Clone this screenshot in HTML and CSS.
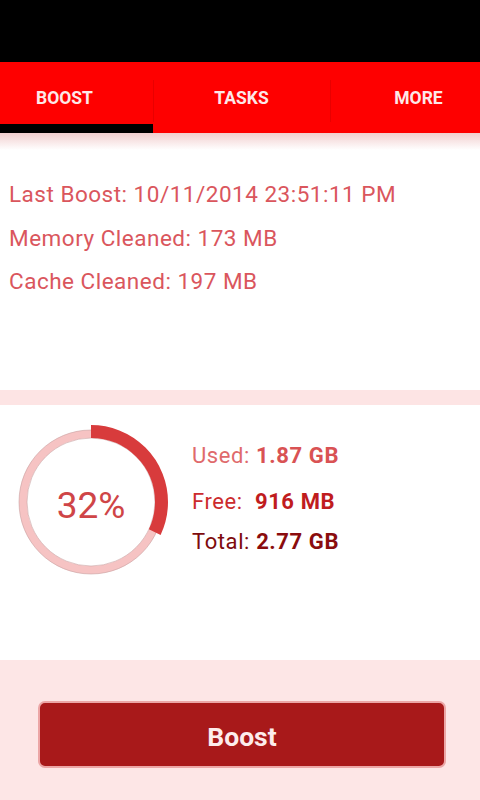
FILE: index.html
```html
<!DOCTYPE html>
<html>
<head>
<meta charset="utf-8">
<link rel="stylesheet" href="styles.css">
</head>
<body>
<div class="status"></div>
<div class="tabbar">
  <div class="tabs">
    <div class="tab active"><span>BOOST</span></div>
    <div class="tab"><span>TASKS</span></div>
    <div class="tab"><span>MORE</span></div>
  </div>
</div>
<div class="shadow"></div>
<div class="info">
  <p class="line">Last Boost: 10/11/2014 23:51:11 PM</p>
  <p class="line">Memory Cleaned: 173 MB</p>
  <p class="line">Cache Cleaned: 197 MB</p>
</div>
<div class="band"></div>
<div class="memory">
  <div class="gauge">
    <svg width="160" height="160" viewBox="0 0 160 160">
      <circle cx="80" cy="80" r="68" fill="none" stroke="#f6c3c3" stroke-width="8"/>
      <circle cx="80" cy="80" r="72" fill="none" stroke="#c9a5a5" stroke-width="0.6"/>
      <circle cx="80" cy="80" r="64" fill="none" stroke="#c9a5a5" stroke-width="0.6"/>
      <circle cx="80" cy="80" r="70.5" fill="none" stroke="#d83b3c" stroke-width="13" stroke-dasharray="141.7 400" transform="rotate(-90 80 80)"/>
    </svg>
    <div class="pct">32%</div>
  </div>
  <div class="stats">
    <div class="row used"><span class="lbl">Used:</span> <b>1.87 GB</b></div>
    <div class="row free"><span class="lbl">Free:</span>&nbsp; <b>916 MB</b></div>
    <div class="row total"><span class="lbl">Total:</span> <b>2.77 GB</b></div>
  </div>
</div>
<div class="footer">
  <button class="boost">Boost</button>
</div>
</body>
</html>
```

FILE: styles.css
```css
* { box-sizing: border-box; }
html, body { margin: 0; padding: 0; }
body {
  width: 480px;
  height: 800px;
  overflow: hidden;
  font-family: Roboto, "Liberation Sans", sans-serif;
  background: #fff;
}
.status { height: 62px; background: #000; }
.tabbar {
  height: 71px;
  background: #fe0000;
  overflow: hidden;
}
.tabs {
  display: flex;
  margin-left: -24px;
  height: 100%;
}
.tab {
  position: relative;
  flex: 0 0 177px;
  display: flex;
  align-items: center;
  justify-content: center;
  color: #fde8e8;
  font-weight: 700;
  font-size: 17.5px;
  padding-top: 1px;
}
.tab + .tab::before {
  content: "";
  position: absolute;
  left: 0;
  top: 18px;
  height: 42px;
  width: 1px;
  background: #e80000;
}
.tab.active::after {
  content: "";
  position: absolute;
  left: 0;
  right: 0;
  bottom: 0;
  height: 9px;
  background: #000;
}
.shadow {
  height: 17px;
  background: linear-gradient(to bottom, #f2cfcf, #ffffff);
}
.info {
  height: 240px;
  padding: 23px 0 0 9px;
}
.line {
  margin: 0;
  font-size: 22.5px;
  letter-spacing: 0.5px;
  line-height: 43.5px;
  color: #da565d;
  white-space: nowrap;
}
.band { height: 15px; background: #fde4e4; }
.memory {
  height: 255px;
  display: flex;
  align-items: flex-start;
  padding: 17px 0 0 11px;
}
.gauge {
  position: relative;
  width: 160px;
  height: 160px;
  flex: 0 0 160px;
}
.gauge svg { display: block; }
.pct {
  position: absolute;
  inset: 0;
  display: flex;
  align-items: center;
  justify-content: center;
  font-size: 37px;
  color: #cf4547;
  padding-top: 7px;
}
.stats {
  margin-left: 21px;
  padding-top: 20px;
  font-size: 22px;
  letter-spacing: 0.6px;
}
.row { white-space: nowrap; line-height: 28px; }
.row b { font-weight: 700; }
.used { color: #df6a6c; }
.used b { color: #d95254; }
.free { color: #cc2b2d; margin-top: 18px; }
.free b { color: #c01c1e; }
.total { color: #7e0b0d; margin-top: 12px; }
.total b { color: #8a0c0e; }
.footer {
  height: 140px;
  background: #fde6e6;
  padding: 41px 0 0 38px;
}
.boost {
  display: block;
  width: 408px;
  height: 67px;
  border: 2px solid #eca6a6;
  border-radius: 7px;
  background: #a8191a;
  color: #fdecec;
  font-family: Roboto, "Liberation Sans", sans-serif;
  font-weight: 700;
  font-size: 26.5px;
  padding: 4px 0 0;
}
```
